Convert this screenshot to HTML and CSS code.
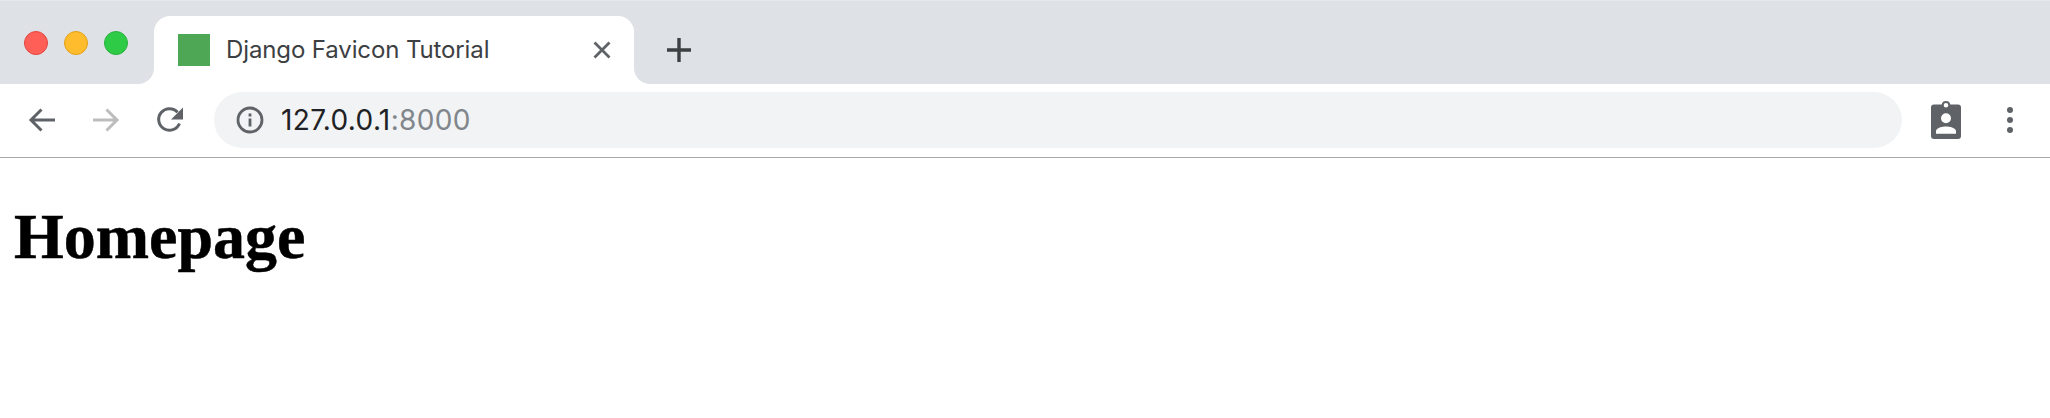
FILE: index.html
```
<!DOCTYPE html>
<html lang="en">
<head>
<meta charset="utf-8">
<title>Django Favicon Tutorial</title>
<link rel="stylesheet" href="styles.css">
</head>
<body>
<div class="strip">
  <div class="lights">
    <span class="light red"></span>
    <span class="light amber"></span>
    <span class="light green"></span>
  </div>
  <div class="tab-slot">
    <div class="tab">
      <span class="favicon"></span>
      <span class="tab-title">Django Favicon Tutorial</span>
      <svg class="tab-close" width="20" height="20" viewBox="0 0 20 20"><path d="M2.5 2.5l15 15M17.500 2.500l-15 15" fill="none" stroke="#5f6368" stroke-width="2.800"/></svg>
    </div>
  </div>
  <div class="strip-rest">
    <svg class="new-tab" width="26" height="26" viewBox="0 0 26 26"><path d="M13 1v24M1 13h24" fill="none" stroke="#3c4043" stroke-width="3.400"/></svg>
  </div>
</div>
<div class="toolbar">
  <svg class="nav back" width="30" height="28" viewBox="0 0 30 28"><path d="M28 14H4M14.500 3.500L4 14l10.500 10.500" fill="none" stroke="#5f6368" stroke-width="3"/></svg>
  <svg class="nav forward" width="30" height="28" viewBox="0 0 30 28"><path d="M2 14h24M15.500 3.500L26 14 15.500 24.500" fill="none" stroke="#bdbdbd" stroke-width="3"/></svg>
  <svg class="nav reload" width="28" height="28" viewBox="0 0 28 28"><path d="M23.500 17.500A10.800 10.800 0 1 1 21.600 6.300" fill="none" stroke="#5f6368" stroke-width="3"/><path d="M27 1.500v12H15z" fill="#5f6368"/></svg>
  <div class="omnibox">
    <svg class="info" width="28" height="28" viewBox="0 0 28 28"><circle cx="14" cy="14" r="12" fill="none" stroke="#5f6368" stroke-width="2.800"/><path d="M12.600 12.500h2.800v8h-2.800zM12.600 7.600h2.800v2.800h-2.800z" fill="#5f6368"/></svg>
    <span class="url">127.0.0.1<span class="port">:8000</span></span>
  </div>
  <svg class="clipboard" width="30" height="38" viewBox="0 0 30 38"><path fill="#5f6368" fill-rule="evenodd" d="M3 3.500h7.700a4.400 4.400 0 0 1 8.600 0H27a3 3 0 0 1 3 3V35a3 3 0 0 1-3 3H3a3 3 0 0 1-3-3V6.500a3 3 0 0 1 3-3zM15 2a2.300 2.300 0 1 0 0 4.600A2.300 2.300 0 0 0 15 2zM15 12.300a5 5 0 1 0 0 10 5 5 0 0 0 0-10zM5 32.700h20v-2.400c0-3.300-6.700-4.700-10-4.700S5 27 5 30.300z"/></svg>
  <div class="menu"><span class="dot"></span><span class="dot"></span><span class="dot"></span></div>
</div>
<h1 class="heading">Homepage</h1>
</body>
</html>
```

FILE: styles.css
```
html, body {
  margin: 0;
  padding: 0;
  background: #fff;
}

body {
  height: 418px;
  overflow: hidden;
}

.strip {
  display: flex;
  height: 84px;
  background: #fff;
}

.lights {
  width: 154px;
  box-sizing: border-box;
  padding: 30px 0 0 24px;
  display: flex;
  gap: 16px;
  align-items: flex-start;
  background: #dee1e6;
  border-bottom-right-radius: 16px;
  border-top: 1px solid #e6e8ec;
}

.light {
  width: 24px;
  height: 24px;
  box-sizing: border-box;
  border-radius: 50%;
  border: 1px solid;
}

.red { background: #ff5f57; border-color: #e2463f; }
.amber { background: #ffbd2e; border-color: #e1a116; }
.green { background: #2ecb47; border-color: #28b13d; }

.tab-slot {
  width: 480px;
  background: #dee1e6;
  padding-top: 15px;
  box-sizing: border-box;
  border-top: 1px solid #e6e8ec;
}

.tab {
  height: 68px;
  background: #fff;
  border-radius: 16px 16px 0 0;
  display: flex;
  align-items: center;
  padding-left: 24px;
  box-sizing: border-box;
}

.favicon {
  width: 32px;
  height: 32px;
  background: #4ea755;
  flex: none;
}

.tab-title {
  margin-left: 16px;
  font: 24px/32px Inter, Roboto, "Liberation Sans", sans-serif;
  letter-spacing: -0.12px;
  color: #3c4043;
  white-space: nowrap;
  flex: 1;
}

.tab-close {
  flex: none;
  margin-right: 22px;
}

.strip-rest {
  flex: 1;
  background: #dee1e6;
  border-bottom-left-radius: 16px;
  border-top: 1px solid #e6e8ec;
  display: flex;
  align-items: flex-start;
  padding: 36px 0 0 32px;
  box-sizing: border-box;
}

.toolbar {
  height: 74px;
  box-sizing: border-box;
  border-bottom: 1px solid #a8a8a8;
  padding-bottom: 1px;
  display: flex;
  align-items: center;
  background: #fff;
}

.nav {
  flex: none;
}

.back { margin-left: 27px; }
.forward { margin-left: 34px; }
.reload { margin-left: 35px; }

.omnibox {
  margin-left: 30px;
  width: 1688px;
  height: 56px;
  background: #f1f3f4;
  border-radius: 28px;
  display: flex;
  align-items: center;
  padding-left: 22px;
  box-sizing: border-box;
  flex: none;
}

.url {
  margin-left: 17px;
  font: 28px/36px Inter, Roboto, "Liberation Sans", sans-serif;
  letter-spacing: 0.35px;
  color: #202124;
}

.port {
  color: #80868b;
}

.clipboard {
  flex: none;
  margin-left: 29px;
}

.menu {
  margin-left: 46px;
  display: flex;
  flex-direction: column;
  gap: 4px;
}

.dot {
  width: 6px;
  height: 6px;
  border-radius: 50%;
  background: #5f6368;
}

.heading {
  margin: 42px 0 0 14px;
  font: bold 64px/74px "Liberation Serif", serif;
  -webkit-text-stroke: 0.5px #000;
  color: #000;
}
```
